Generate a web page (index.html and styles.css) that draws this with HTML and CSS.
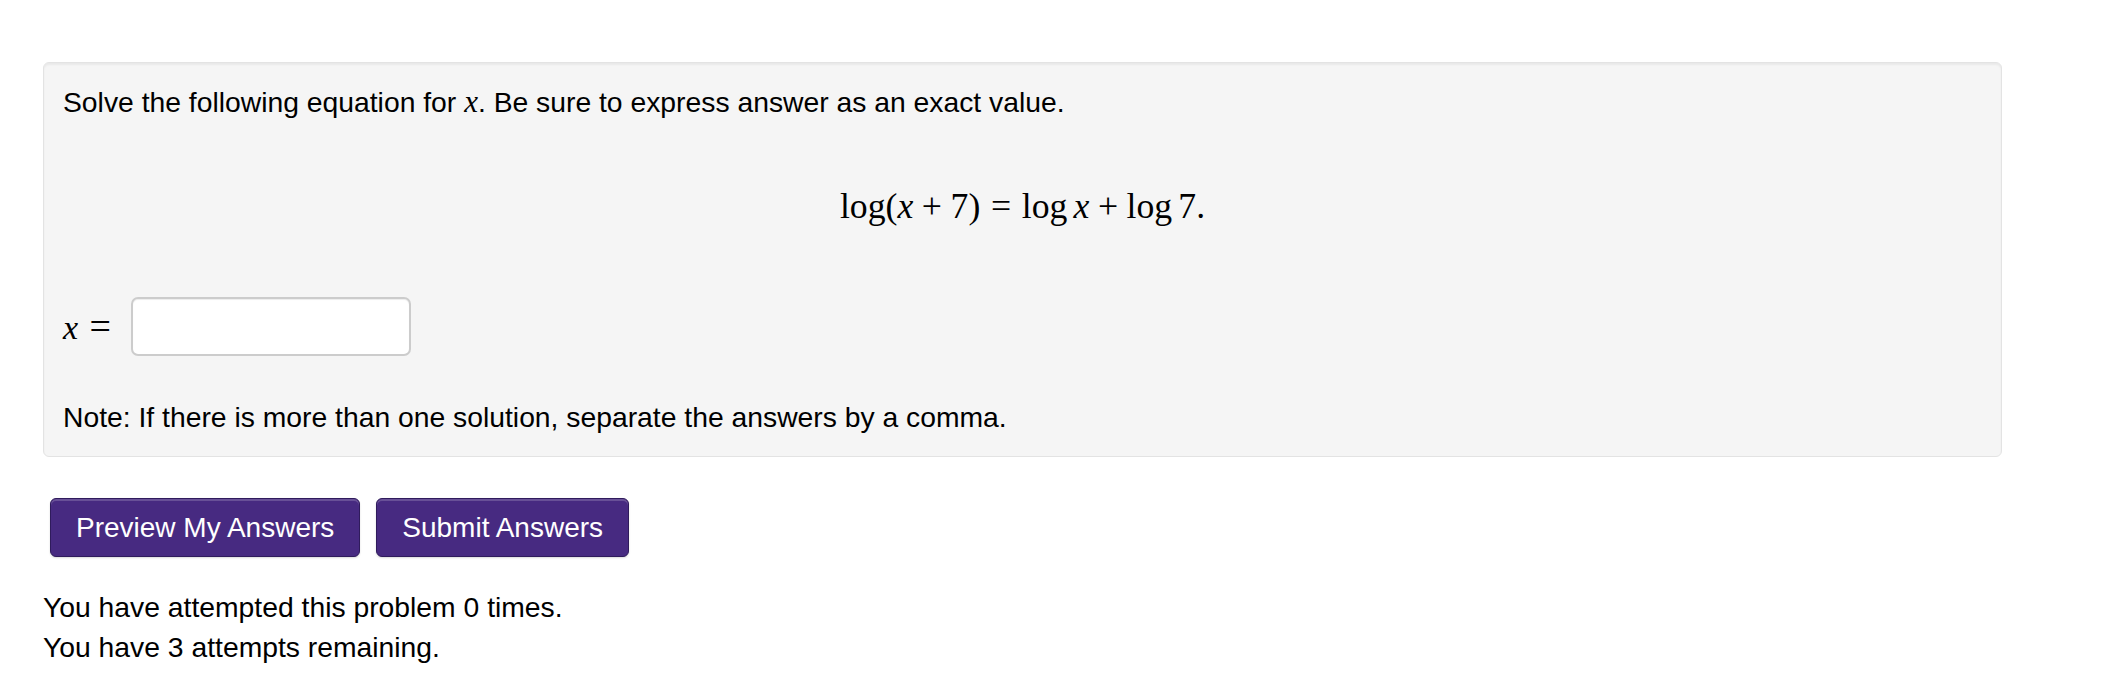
FILE: index.html
```html
<!DOCTYPE html>
<html lang="en">
<head>
<meta charset="utf-8">
<title>Problem</title>
<link rel="stylesheet" href="styles.css">
</head>
<body>
<div class="page">
  <div class="well">
    <p class="prompt">Solve the following equation for <span class="mi">x</span>. Be sure to express answer as an exact value.</p>
    <div class="display-eq"><span class="fn">log</span>(<span class="mi">x</span><span class="bin">+</span>7)<span class="rel">=</span><span class="fn">log</span><span class="thin"></span><span class="mi">x</span><span class="bin">+</span><span class="fn">log</span><span class="thin"></span>7.</div>
    <div class="answer-row">
      <span class="ans-label"><span class="mi">x</span><span class="rel">=</span></span>
      <input class="ans-input" type="text" aria-label="answer">
    </div>
    <p class="note">Note: If there is more than one solution, separate the answers by a comma.</p>
  </div>
  <div class="buttons">
    <button class="btn" type="button">Preview My Answers</button>
    <button class="btn" type="button">Submit Answers</button>
  </div>
  <div class="attempts">
    <p>You have attempted this problem 0 times.</p>
    <p>You have 3 attempts remaining.</p>
  </div>
</div>
</body>
</html>
```

FILE: styles.css
```css
html, body {
  margin: 0;
  padding: 0;
  background: #ffffff;
}

body {
  font-family: "Liberation Sans", Arial, Helvetica, sans-serif;
  font-size: 28.3px;
  line-height: 40px;
  color: #000000;
}

.page {
  padding-top: 62px;
  margin-left: 43px;
  width: 1959px;
}

.well {
  background: #f5f5f5;
  border: 1px solid #e3e3e3;
  border-radius: 6px;
  box-shadow: inset 0 2px 2px rgba(0, 0, 0, 0.05);
  padding: 19px 19px 19px 19px;
}

.prompt,
.note {
  margin: 0;
}

.mi {
  font-family: "Liberation Serif", "Times New Roman", serif;
  font-style: italic;
  font-size: 31px;
}

.display-eq {
  margin-top: 64px;
  text-align: center;
  font-family: "Liberation Serif", "Times New Roman", serif;
  font-size: 35.7px;
  line-height: 40px;
}

.display-eq .mi {
  font-size: 35.7px;
}

.bin {
  margin: 0 0.24em;
}

.rel {
  margin: 0 0.3em;
}

.thin {
  display: inline-block;
  width: 0.17em;
}

.answer-row {
  display: flex;
  align-items: center;
  margin-top: 71px;
}

.ans-label {
  font-family: "Liberation Serif", "Times New Roman", serif;
  font-size: 34px;
  margin-right: 20px;
}

.ans-label .mi {
  font-size: 34px;
}

.ans-label .rel {
  margin-right: 0;
  font-size: 38px;
}

.ans-input {
  box-sizing: border-box;
  width: 280px;
  height: 59px;
  border: 2px solid #cccccc;
  border-radius: 7px;
  background: #ffffff;
  box-shadow: inset 0 1px 1px rgba(0, 0, 0, 0.075);
  margin: 0;
  padding: 0 10px;
  font-size: 28px;
}

.note {
  margin-top: 41px;
}

.buttons {
  display: flex;
  gap: 16px;
  margin-top: 41px;
  margin-left: 7px;
}

.btn {
  box-sizing: border-box;
  height: 59px;
  padding: 0 25px;
  font-family: "Liberation Sans", Arial, Helvetica, sans-serif;
  font-size: 28px;
  color: #ffffff;
  background: #472a81;
  border: 1px solid #2f1b5c;
  border-radius: 6px;
  box-shadow: inset 0 2px 0 rgba(255, 255, 255, 0.18), 0 1px 2px rgba(0, 0, 0, 0.15);
  cursor: pointer;
}

.attempts {
  margin-top: 30px;
}

.attempts p {
  margin: 0;
}
```
